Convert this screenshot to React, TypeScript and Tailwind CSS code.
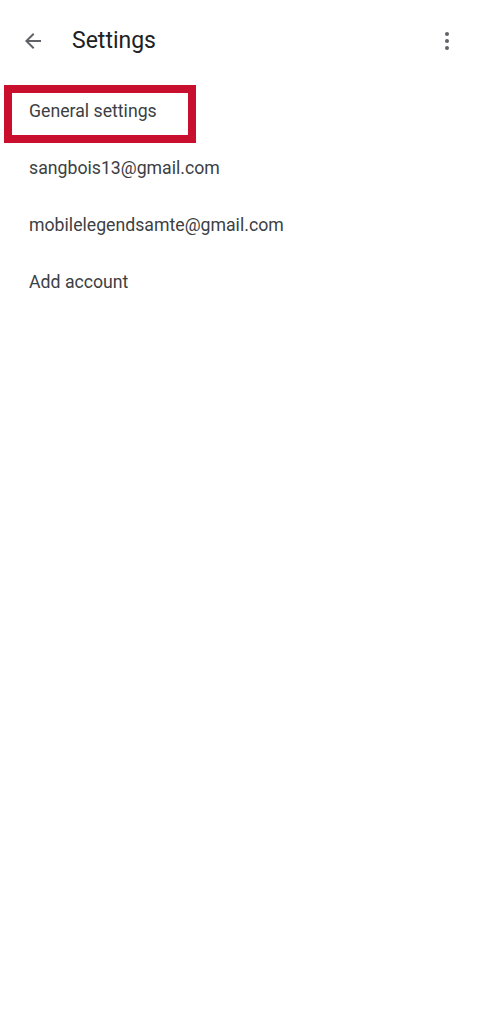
export default function App() {
    const rows = ["General settings", "sangbois13@gmail.com", "mobilelegendsamte@gmail.com", "Add account"];

    return (
        <div className="min-h-screen w-full bg-white font-['Roboto',sans-serif]">
            <header className="flex h-[82px] items-center pl-[21px] pr-[19px]">
                <svg viewBox="0 0 24 24" className="h-6 w-6 fill-[#5f6368]">
                    <path d="M20 11H7.83l5.59-5.59L12 4l-8 8 8 8 1.41-1.41L7.83 13H20v-2z" />
                </svg>
                <h1 className="ml-[27px] flex-1 text-[23px] text-[#202124]">Settings</h1>
                <svg viewBox="0 0 24 24" className="h-6 w-6 fill-[#5f6368]">
                    <circle cx="12" cy="5" r="2" />
                    <circle cx="12" cy="12" r="2" />
                    <circle cx="12" cy="19" r="2" />
                </svg>
            </header>

            <ul>
                {rows.map((label, i) => (
                    <li key={label} className="relative flex h-[57px] items-center pl-[29px] text-[17.7px] leading-6 text-[#3c4043]">
                        {label}
                        {i === 0 && (
                            <span className="pointer-events-none absolute left-[4px] top-[3px] h-[58px] w-[192px] border-[8px] border-[#c8102e]" />
                        )}
                    </li>
                ))}
            </ul>
        </div>
    );
}
